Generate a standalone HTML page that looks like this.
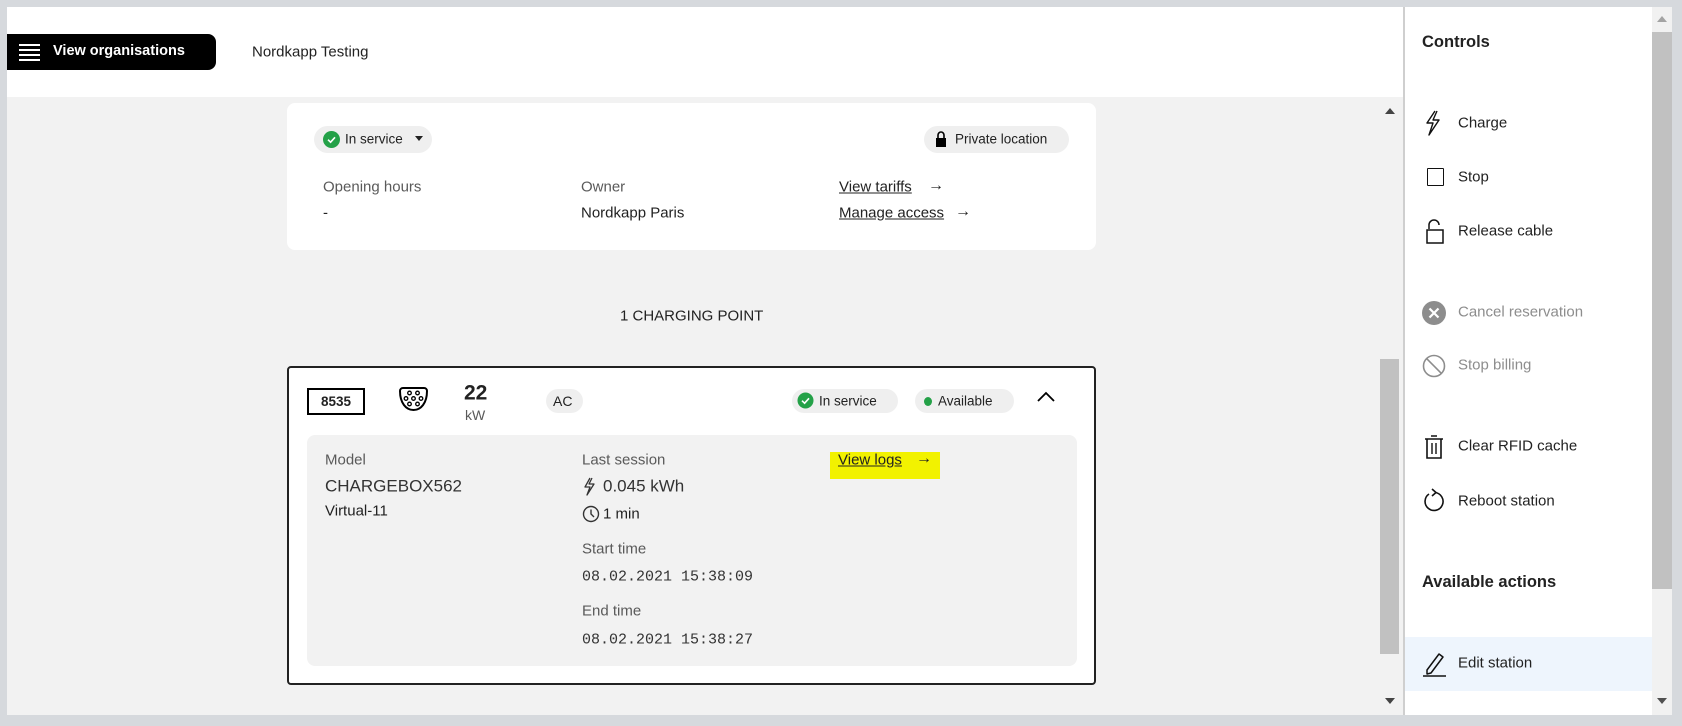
<!DOCTYPE html>
<html><head><meta charset="utf-8"><style>
*{margin:0;padding:0;box-sizing:border-box}
body{width:1682px;height:726px;background:#d6d9dd;font-family:"Liberation Sans",sans-serif;color:#222;position:relative;overflow:hidden}
.a{position:absolute}
.t{position:absolute;white-space:nowrap;line-height:1;transform:translateY(-50%)}
.pill{position:absolute;background:#efefef;border-radius:14px}
.g{color:#5a5a5a}
.u{text-decoration:underline}
.mono{font-family:"Liberation Mono",monospace}
</style></head><body>
<!-- main area -->
<div class="a" style="left:7px;top:7px;width:1396px;height:90px;background:#fff"></div>
<div class="a" style="left:7px;top:97px;width:1396px;height:618px;background:#f2f2f2"></div>
<!-- header -->
<div class="a" style="left:7px;top:34px;width:209px;height:36px;background:#000;border-radius:0 8px 8px 0"></div>
<svg class="a" style="left:19px;top:43px" width="21" height="18"><g stroke="#fff" stroke-width="2"><line x1="0" y1="2" x2="21" y2="2"/><line x1="0" y1="7" x2="21" y2="7"/><line x1="0" y1="12" x2="21" y2="12"/><line x1="0" y1="17" x2="21" y2="17"/></g></svg>
<div class="t" style="left:53px;top:51px;color:#fff;font-weight:bold;font-size:14.5px">View organisations</div>
<div class="t" style="left:252px;top:52px;font-size:15px">Nordkapp Testing</div>
<!-- main scrollbar -->
<svg class="a" style="left:1383px;top:106px" width="14" height="10"><path d="M2 8 L7 2 L12 8Z" fill="#444"/></svg>
<div class="a" style="left:1380px;top:359px;width:19px;height:295px;background:#c1c1c1"></div>
<svg class="a" style="left:1383px;top:696px" width="14" height="10"><path d="M2 2 L7 8 L12 2Z" fill="#444"/></svg>
<!-- top card -->
<div class="a" style="left:287px;top:103px;width:809px;height:147px;background:#fff;border-radius:8px"></div>
<div class="pill" style="left:314px;top:126px;width:118px;height:27px"></div>
<svg class="a" style="left:323px;top:131px" width="17" height="17"><circle cx="8.5" cy="8.5" r="8.5" fill="#24a148"/><path d="M5 8.7 L7.6 11.2 L12 6.3" stroke="#fff" stroke-width="1.6" fill="none"/></svg>
<div class="t" style="left:345px;top:139px;font-size:13.5px">In service</div>
<svg class="a" style="left:414px;top:135px" width="10" height="8"><path d="M1 1 L9 1 L5 6Z" fill="#222"/></svg>
<div class="pill" style="left:924px;top:126px;width:145px;height:27px"></div>
<svg class="a" style="left:935px;top:130px" width="12" height="18"><path d="M3 8 V5 a3 3 0 0 1 6 0 V8" stroke="#000" stroke-width="1.6" fill="none"/><rect x="1" y="8" width="10" height="9" fill="#000"/></svg>
<div class="t" style="left:955px;top:139px;font-size:13.5px">Private location</div>
<div class="t g" style="left:323px;top:187px;font-size:15px">Opening hours</div>
<div class="t" style="left:323px;top:213px;font-size:15px">-</div>
<div class="t g" style="left:581px;top:187px;font-size:15px">Owner</div>
<div class="t" style="left:581px;top:213px;font-size:15px">Nordkapp Paris</div>
<div class="t u" style="left:839px;top:187px;font-size:15px">View tariffs</div>
<div class="t" style="left:928px;top:186px;font-size:16px">→</div>
<div class="t u" style="left:839px;top:213px;font-size:15px">Manage access</div>
<div class="t" style="left:955px;top:212px;font-size:16px">→</div>
<div class="t" style="left:620px;top:316px;font-size:15px">1 CHARGING POINT</div>
<!-- charging card -->
<div class="a" style="left:287px;top:366px;width:809px;height:319px;background:#fff;border:2px solid #222;border-radius:4px"></div>
<div class="a" style="left:307px;top:388px;width:58px;height:27px;border:2px solid #000;font-weight:bold;font-size:13.5px;text-align:center;line-height:23px">8535</div>
<svg class="a" style="left:399px;top:385px" width="29" height="27"><path d="M4 3 H25 A3 3 0 0 1 28 6 C28 18 22 25 14.5 25 C7 25 1 18 1 6 A3 3 0 0 1 4 3Z" stroke="#000" stroke-width="2" fill="none"/><g fill="none" stroke="#000" stroke-width="1.3"><circle cx="10.5" cy="8" r="1.8"/><circle cx="18.5" cy="8" r="1.8"/><circle cx="7" cy="13.5" r="1.8"/><circle cx="14.5" cy="13.5" r="1.8"/><circle cx="22" cy="13.5" r="1.8"/><circle cx="10.5" cy="19" r="1.8"/><circle cx="18.5" cy="19" r="1.8"/></g></svg>
<div class="t" style="left:464px;top:393px;font-size:21px;font-weight:bold">22</div>
<div class="t g" style="left:465px;top:415px;font-size:14px">kW</div>
<div class="pill" style="left:546px;top:389px;width:37px;height:24px;border-radius:12px"></div>
<div class="t" style="left:553px;top:401px;font-size:14px">AC</div>
<div class="pill" style="left:792px;top:389px;width:106px;height:24px;border-radius:12px"></div>
<svg class="a" style="left:797px;top:392px" width="17" height="17"><circle cx="8.5" cy="8.5" r="8" fill="#24a148"/><path d="M5 8.7 L7.6 11.2 L12 6.3" stroke="#fff" stroke-width="1.6" fill="none"/></svg>
<div class="t" style="left:819px;top:401px;font-size:13.5px">In service</div>
<div class="pill" style="left:915px;top:389px;width:99px;height:24px;border-radius:12px"></div>
<div class="a" style="left:924px;top:397px;width:8px;height:9px;border-radius:50%;background:#24a148"></div>
<div class="t" style="left:938px;top:401px;font-size:13.5px">Available</div>
<svg class="a" style="left:1036px;top:391px" width="20" height="12"><path d="M2 10 L10 2 L18 10" stroke="#000" stroke-width="1.8" fill="none"/></svg>
<div class="a" style="left:307px;top:435px;width:770px;height:231px;background:#f2f2f2;border-radius:8px"></div>
<div class="t g" style="left:325px;top:460px;font-size:15px">Model</div>
<div class="t" style="left:325px;top:486px;font-size:17px;color:#333">CHARGEBOX562</div>
<div class="t" style="left:325px;top:511px;font-size:15px">Virtual-11</div>
<div class="t g" style="left:582px;top:460px;font-size:15px">Last session</div>
<svg class="a" style="left:583px;top:477px" width="12" height="19"><path d="M7 1 L2 10 H7 L4 18 L11 7 H6 L9 1" stroke="#333" stroke-width="1.3" fill="none" stroke-linejoin="round"/></svg>
<div class="t" style="left:603px;top:486px;font-size:17px;color:#333">0.045 kWh</div>
<svg class="a" style="left:582px;top:505px" width="18" height="18"><circle cx="9" cy="9" r="7.5" stroke="#333" stroke-width="1.4" fill="none"/><path d="M9 4.5 V9 L12 12" stroke="#333" stroke-width="1.4" fill="none"/></svg>
<div class="t" style="left:603px;top:514px;font-size:15px">1 min</div>
<div class="t g" style="left:582px;top:549px;font-size:15px">Start time</div>
<div class="t mono" style="left:582px;top:577px;font-size:15px;color:#333">08.02.2021 15:38:09</div>
<div class="t g" style="left:582px;top:611px;font-size:15px">End time</div>
<div class="t mono" style="left:582px;top:640px;font-size:15px;color:#333">08.02.2021 15:38:27</div>
<div class="a" style="left:830px;top:452px;width:110px;height:27px;background:#f2f200"></div>
<div class="t u" style="left:838px;top:460px;font-size:15px">View logs</div>
<div class="t" style="left:916px;top:459px;font-size:16px">→</div>
<!-- sidebar -->
<div class="a" style="left:1403px;top:7px;width:2px;height:708px;background:#cfcfcf"></div>
<div class="a" style="left:1405px;top:7px;width:247px;height:708px;background:#fff"></div>
<div class="a" style="left:1652px;top:7px;width:20px;height:708px;background:#f1f1f1"></div>
<svg class="a" style="left:1655px;top:14px" width="14" height="10"><path d="M2 8 L7 2 L12 8Z" fill="#a3a3a3"/></svg>
<div class="a" style="left:1652px;top:32px;width:20px;height:557px;background:#c1c1c1"></div>
<svg class="a" style="left:1655px;top:696px" width="14" height="10"><path d="M2 2 L7 8 L12 2Z" fill="#505050"/></svg>
<div class="t" style="left:1422px;top:42px;font-size:16.5px;font-weight:bold">Controls</div>
<svg class="a" style="left:1425px;top:110px" width="16" height="26"><path d="M10 1 L2 13 H8 L4 25 L14 10 H8 L12 1" stroke="#111" stroke-width="1.4" fill="none" stroke-linejoin="round"/></svg>
<div class="t" style="left:1458px;top:123px;font-size:15px">Charge</div>
<div class="a" style="left:1427px;top:168px;width:17px;height:18px;border:1.6px solid #111;border-radius:1px"></div>
<div class="t" style="left:1458px;top:177px;font-size:15px">Stop</div>
<svg class="a" style="left:1425px;top:218px" width="20" height="27"><path d="M4 11 V7 a5 5 0 0 1 10 0" stroke="#111" stroke-width="1.5" fill="none"/><rect x="2" y="12" width="16" height="13" stroke="#111" stroke-width="1.5" fill="none"/></svg>
<div class="t" style="left:1458px;top:231px;font-size:15px">Release cable</div>
<svg class="a" style="left:1422px;top:301px" width="24" height="24"><circle cx="12" cy="12" r="12" fill="#8d8d8d"/><path d="M7.5 7.5 L16.5 16.5 M16.5 7.5 L7.5 16.5" stroke="#fff" stroke-width="2.2"/></svg>
<div class="t" style="left:1458px;top:312px;font-size:15px;color:#8d8d8d">Cancel reservation</div>
<svg class="a" style="left:1422px;top:354px" width="24" height="24"><circle cx="12" cy="12" r="10.5" stroke="#8d8d8d" stroke-width="1.6" fill="none"/><path d="M4.6 4.6 L19.4 19.4" stroke="#8d8d8d" stroke-width="1.6"/></svg>
<div class="t" style="left:1458px;top:365px;font-size:15px;color:#8d8d8d">Stop billing</div>
<svg class="a" style="left:1424px;top:434px" width="20" height="26"><path d="M1 5 H19 M7 2 H13" stroke="#111" stroke-width="1.6"/><path d="M3 5 V24 H17 V5" stroke="#111" stroke-width="1.6" fill="none"/><path d="M8 9 V20 M12 9 V20" stroke="#111" stroke-width="1.4"/></svg>
<div class="t" style="left:1458px;top:446px;font-size:15px">Clear RFID cache</div>
<svg class="a" style="left:1422px;top:488px" width="24" height="26"><path d="M7 6 A9 9 0 1 0 13 4.5" stroke="#111" stroke-width="1.6" fill="none"/><path d="M10 1 L14 4.5 L10 8" stroke="#111" stroke-width="1.6" fill="none"/></svg>
<div class="t" style="left:1458px;top:501px;font-size:15px">Reboot station</div>
<div class="t" style="left:1422px;top:582px;font-size:16.5px;font-weight:bold">Available actions</div>
<div class="a" style="left:1405px;top:637px;width:247px;height:54px;background:#eef5fd"></div>
<svg class="a" style="left:1422px;top:651px" width="25" height="26"><path d="M5 19 L17 3 L21 6 L9 22 L5 23Z" stroke="#111" stroke-width="1.5" fill="none" stroke-linejoin="round"/><path d="M1 25 H24" stroke="#111" stroke-width="1.6"/></svg>
<div class="t" style="left:1458px;top:663px;font-size:15px">Edit station</div>
</body></html>
